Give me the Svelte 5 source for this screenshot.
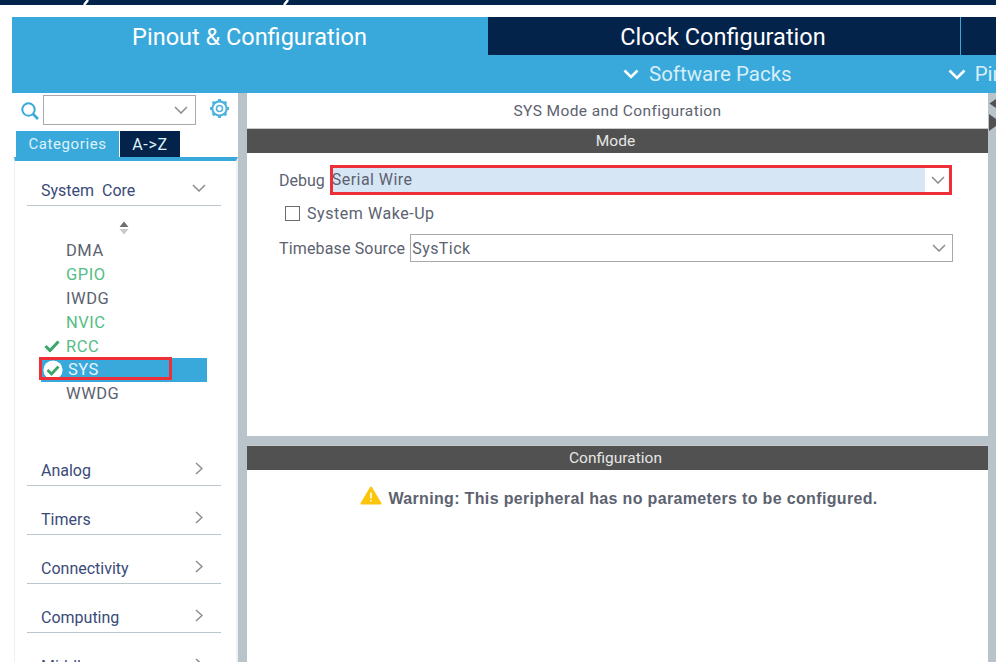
<script>
  let tree = [
    { name: "DMA", cls: "" },
    { name: "GPIO", cls: "green" },
    { name: "IWDG", cls: "" },
    { name: "NVIC", cls: "green" },
    { name: "RCC", cls: "green", icon: "check" },
    { name: "SYS", cls: "selected", icon: "circle" },
    { name: "WWDG", cls: "" },
  ];
  let groups = ["Analog", "Timers", "Connectivity", "Computing", "Middleware"];
</script>

<div class="page">
  <div class="crumbs">
    <svg width="996" height="5" viewBox="0 0 996 5">
      <path d="M88 0 L84 5 M288 0 L284 5" stroke="#fff" stroke-width="2.5" fill="none" />
    </svg>
  </div>

  <div class="tabs">
    <div class="tab active">Pinout &amp; Configuration</div>
    <div class="tab clock">Clock Configuration</div>
    <div class="tab last"></div>
  </div>

  <div class="subbar">
    <div class="sub packs">
      <svg width="16" height="10" viewBox="0 0 16 10"><path d="M1.5 1.5 L8 8 L14.5 1.5" class="subchev" /></svg>
      <span>Software Packs</span>
    </div>
    <div class="sub pin">
      <svg width="18" height="11" viewBox="0 0 18 11"><path d="M1.5 1.5 L9 9 L16.5 1.5" class="subchev" /></svg>
      <span>Pinout</span>
    </div>
  </div>

  <div class="main">
    <aside class="left">
      <div class="search">
        <svg class="lens" width="18" height="18" viewBox="0 0 18 18">
          <circle cx="7.5" cy="7.5" r="6.2" fill="none" stroke="#39a9dc" stroke-width="2" />
          <path d="M12 12 L17 17" stroke="#39a9dc" stroke-width="2.6" />
        </svg>
        <div class="combo">
          <svg width="14" height="8" viewBox="0 0 14 8"><path d="M1 1 L7 7 L13 1" class="chev" /></svg>
        </div>
        <svg class="gear" width="21" height="21" viewBox="0 0 21 21">
          <circle cx="10.5" cy="10.5" r="7.2" fill="none" stroke="#4fb3e0" stroke-width="2.2" />
          <circle cx="10.5" cy="10.5" r="3" fill="none" stroke="#4fb3e0" stroke-width="1.6" />
          <path d="M10.5 1 V4 M10.5 17 V20 M1 10.5 H4 M17 10.5 H20 M3.8 3.8 L5.9 5.9 M15.1 15.1 L17.2 17.2 M17.2 3.8 L15.1 5.9 M5.9 15.1 L3.8 17.2" stroke="#4fb3e0" stroke-width="3" />
        </svg>
      </div>

      <div class="ltabs">
        <div class="ltab on">Categories</div>
        <div class="ltab off">A-&gt;Z</div>
      </div>

      <div class="panel">
        <div class="group open">
          <span>System Core</span>
          <svg width="14" height="8" viewBox="0 0 14 8"><path d="M1 1 L7 7 L13 1" class="chev" /></svg>
        </div>

        <div class="sorter">
          <svg width="10" height="14" viewBox="0 0 10 14">
            <path d="M5 0.5 L9.5 6 H0.5 Z" fill="#6e6e6e" />
            <path d="M5 13.5 L9.5 8 H0.5 Z" fill="#c9c9c9" />
          </svg>
        </div>

        <div class="tree">
          {#each tree as item}
            <div class="item {item.cls}">
              {#if item.icon === "check"}
                <svg class="mark" width="16" height="13" viewBox="0 0 16 13"><path d="M1.5 6.5 L6 11 L14.5 2" fill="none" stroke="#3ba56a" stroke-width="3" /></svg>
              {:else if item.icon === "circle"}
                <svg class="mark" width="20" height="20" viewBox="0 0 20 20">
                  <circle cx="10" cy="10" r="9.6" fill="#fff" />
                  <path d="M4.5 10 L8.5 14 L15.5 6.5" fill="none" stroke="#3ba56a" stroke-width="2.8" />
                </svg>
              {/if}
              <span>{item.name}</span>
            </div>
          {/each}
          <div class="redbox"></div>
        </div>

        {#each groups as g}
          <div class="group">
            <span>{g}</span>
            <svg width="8" height="13" viewBox="0 0 8 13"><path d="M1 1 L7 6.5 L1 12" class="chev" /></svg>
          </div>
        {/each}
      </div>
    </aside>

    <div class="split"></div>

    <section class="center">
      <div class="title">SYS Mode and Configuration</div>
      <div class="head">Mode</div>
      <div class="mode">
        <div class="row debug">
          <span>Debug</span>
          <div class="select wire">
            <span class="value">Serial Wire</span>
            <span class="arrow"><svg width="14" height="8" viewBox="0 0 14 8"><path d="M1 1 L7 7 L13 1" class="chev" /></svg></span>
          </div>
        </div>
        <div class="row wake">
          <span class="box"></span>
          <span>System Wake-Up</span>
        </div>
        <div class="row base">
          <span class="tb">Timebase Source</span>
          <div class="select">
            <span class="value">SysTick</span>
            <span class="arrow"><svg width="14" height="8" viewBox="0 0 14 8"><path d="M1 1 L7 7 L13 1" class="chev" /></svg></span>
          </div>
        </div>
      </div>
      <div class="gap"></div>
      <div class="head">Configuration</div>
      <div class="config">
        <svg width="22" height="19" viewBox="0 0 22 19">
          <path d="M11 1.5 L20.5 17.5 H1.5 Z" fill="#fcc40a" stroke="#fcc40a" stroke-width="2" stroke-linejoin="round" />
          <path d="M11 6.5 V12.5 M11 14 V15.6" stroke="#fff" stroke-width="1.6" />
        </svg>
        <strong>Warning: This peripheral has no parameters to be configured.</strong>
      </div>
    </section>

    <div class="split right">
      <svg width="8" height="40" viewBox="0 0 8 40">
        <path d="M8 6 L1.5 10.5 L8 15 Z M1 21 L8 26 V33 L1 38 Z" fill="#505150" />
      </svg>
    </div>
  </div>
</div>

<style>
  :global(body) {
    margin: 0;
    background: #fff;
  }

  .page {
    width: 996px;
    height: 662px;
    overflow: hidden;
    display: flex;
    flex-direction: column;
    font-family: Roboto, "Liberation Sans", sans-serif;
    font-size: 16px;
    color: #5c6270;
    background: #fff;
  }

  .crumbs {
    height: 5px;
    flex: none;
    background: #03234b;
    margin-bottom: 12px;
  }
  .crumbs svg {
    display: block;
  }

  .tabs {
    flex: none;
    height: 38px;
    margin-left: 12px;
    display: flex;
    font-size: 23.5px;
    color: #fff;
    background: #39a9dc;
  }
  .tab {
    display: flex;
    align-items: center;
    justify-content: center;
    padding-top: 2px;
    box-sizing: border-box;
  }
  .tab.active {
    width: 475px;
    background: #39a9dc;
  }
  .tab.clock {
    width: 472px;
    margin-left: 1px;
    padding-right: 2px;
    background: #03234b;
  }
  .tab.last {
    flex: 1;
    margin-left: 1px;
    background: #03234b;
  }

  .subbar {
    flex: none;
    height: 38px;
    margin-left: 12px;
    background: #39a9dc;
    display: flex;
    align-items: center;
    font-size: 20.5px;
    color: #d7eef9;
    white-space: nowrap;
    overflow: hidden;
  }
  .sub {
    display: flex;
    align-items: center;
    gap: 10px;
  }
  .packs {
    margin-left: 611px;
  }
  .pin {
    margin-left: 156px;
    gap: 9px;
  }
  .subchev {
    fill: none;
    stroke: #fff;
    stroke-width: 2.6;
  }

  .main {
    flex: 1;
    display: flex;
    min-height: 0;
    margin-left: 14px;
  }

  .left {
    width: 224px;
    flex: none;
    display: flex;
    flex-direction: column;
    overflow: hidden;
  }

  .search {
    height: 38px;
    flex: none;
    display: flex;
    align-items: flex-start;
    padding-top: 2px;
    box-sizing: border-box;
  }
  .lens {
    margin: 7px 0 0 7px;
  }
  .combo {
    width: 153px;
    height: 30px;
    box-sizing: border-box;
    margin-left: 4px;
    border: 1px solid #a9a9a9;
    display: flex;
    align-items: center;
    justify-content: flex-end;
    padding-right: 7px;
  }
  .gear {
    margin: 3px 0 0 13px;
  }

  .ltabs {
    flex: none;
    height: 26px;
    display: flex;
    font-size: 15px;
    letter-spacing: 0.6px;
    color: #dff1fa;
    padding-left: 2px;
  }
  .ltab {
    display: flex;
    align-items: center;
    justify-content: center;
  }
  .ltab.on {
    width: 103px;
    background: #39a9dc;
  }
  .ltab.off {
    width: 60px;
    margin-left: 1px;
    font-size: 16px;
    letter-spacing: 0.7px;
    background: #03234b;
  }

  .panel {
    flex: 1;
    min-height: 0;
    border-top: 4px solid #39a9dc;
    border-left: 1px solid #eef0f1;
    border-right: 2px solid #eef0f1;
    padding: 0 15px 0 12px;
  }

  .group {
    height: 39px;
    margin-top: 10px;
    box-sizing: border-box;
    border-bottom: 1px solid #bcc7cd;
    display: flex;
    align-items: flex-end;
    justify-content: space-between;
    padding: 0 18px 5px 14px;
    color: #3a4a78;
    font-size: 16px;
    word-spacing: 4px;
  }
  .group svg {
    margin-bottom: 5px;
  }
  .group.open {
    margin-top: 6px;
    padding-right: 15px;
  }
  .group.open svg {
    margin-bottom: 8px;
  }

  .sorter {
    height: 29px;
    display: flex;
    align-items: flex-end;
    justify-content: center;
    margin-left: -1px;
  }
  .sorter svg {
    display: block;
  }

  .tree {
    margin-top: 4px;
    height: 198px;
    position: relative;
  }
  .item {
    height: 23.8px;
    box-sizing: border-box;
    display: flex;
    align-items: center;
    margin-left: 14px;
    padding-left: 25px;
    width: 166px;
    position: relative;
    color: #5c6270;
    font-size: 16.5px;
    letter-spacing: 0.5px;
  }
  .item.green {
    color: #55bd85;
  }
  .item.selected {
    background: #39a9dc;
    color: #e6f4fb;
    padding-left: 27px;
  }
  .mark {
    position: absolute;
    left: 3px;
    top: 50%;
    transform: translateY(-50%);
  }
  .item.selected .mark {
    left: 2px;
  }
  .redbox {
    position: absolute;
    left: 12px;
    top: 118px;
    width: 133px;
    height: 23px;
    box-sizing: border-box;
    border: 3px solid #ee2f37;
  }

  .chev {
    fill: none;
    stroke: #8c8c8c;
    stroke-width: 1.5;
  }

  .split {
    width: 9px;
    flex: none;
    background: #b8c4ca;
  }
  .split.right {
    width: 8px;
  }
  .split.right svg {
    display: block;
  }

  .center {
    flex: 1;
    min-width: 0;
    display: flex;
    flex-direction: column;
  }
  .title {
    height: 36px;
    flex: none;
    display: flex;
    align-items: center;
    justify-content: center;
    box-sizing: border-box;
    font-size: 15.5px;
    letter-spacing: 0.4px;
    color: #5c6270;
  }
  .head {
    flex: none;
    height: 24px;
    background: #505150;
    color: #e6e6e6;
    display: flex;
    align-items: center;
    justify-content: center;
    padding-right: 4px;
    font-size: 15.5px;
    box-shadow: 0 -1px 0 #c9c9c9;
  }
  .mode {
    flex: none;
    height: 283px;
    box-sizing: border-box;
    padding-left: 32px;
    padding-top: 12px;
    font-size: 16px;
    color: #5c6270;
  }
  .row {
    display: flex;
    align-items: center;
  }
  .debug {
    height: 30px;
    gap: 5px;
  }
  .wake {
    height: 28px;
    margin-top: 4px;
    padding-left: 6px;
    gap: 7px;
    letter-spacing: 0.55px;
  }
  .base {
    height: 28px;
    margin-top: 7px;
    gap: 5px;
  }
  .tb {
    letter-spacing: 0.15px;
  }
  .box {
    width: 15px;
    height: 15px;
    box-sizing: border-box;
    border: 1.5px solid #6b6b6b;
  }
  .select {
    flex: 1;
    margin-right: 35px;
    height: 100%;
    box-sizing: border-box;
    border: 1px solid #a9a9a9;
    display: flex;
    align-items: center;
    justify-content: space-between;
  }
  .value {
    padding-left: 1px;
    letter-spacing: 0.45px;
  }
  .wire .value {
    margin-top: -2px;
  }
  .arrow {
    width: 26px;
    height: 100%;
    background: #fff;
    display: flex;
    align-items: center;
    justify-content: center;
  }
  .wire {
    background: #d7e6f4;
    outline: 3px solid #ee2f37;
    outline-offset: -3px;
    margin-right: 36px;
  }
  .gap {
    flex: none;
    height: 10px;
    background: #b8c4ca;
  }
  .config {
    flex: 1;
    display: flex;
    align-items: flex-start;
    justify-content: center;
    gap: 6px;
    padding: 16px 0 0 3px;
    font-size: 16px;
    color: #5c6270;
  }
  .config strong {
    margin-top: 4px;
    font-weight: 700;
    font-family: "Liberation Sans", sans-serif;
    font-size: 16px;
    letter-spacing: 0.34px;
  }
</style>
